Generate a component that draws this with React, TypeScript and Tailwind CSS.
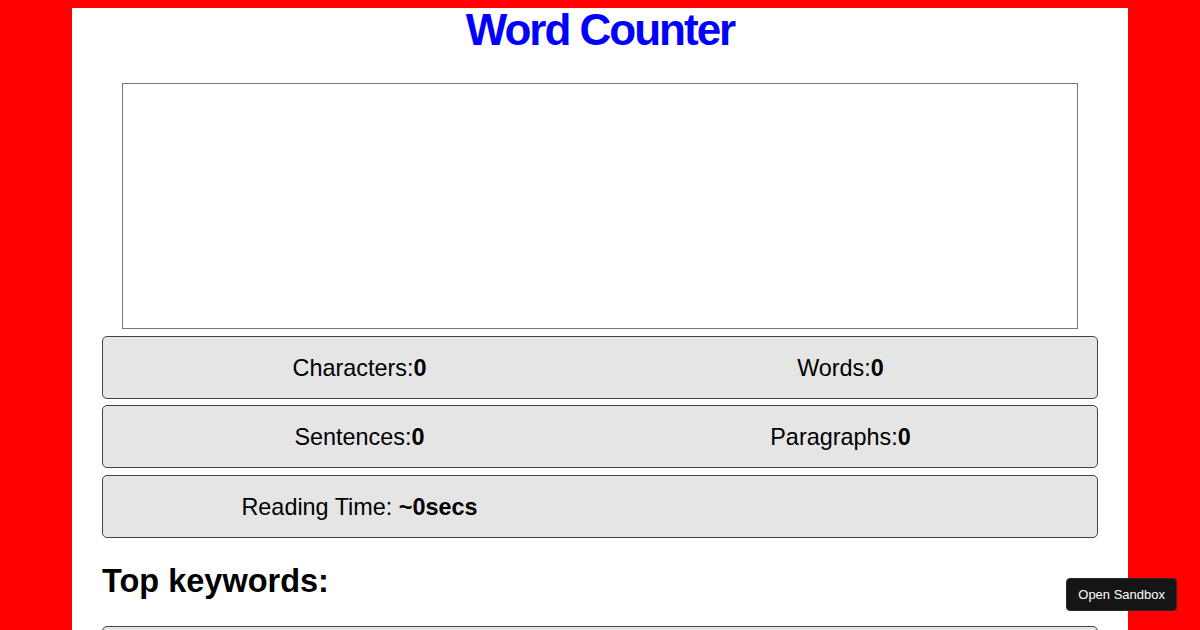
import React from "react";

function Stat({ label, value }: { label: string; value: string }) {
  return (
    <div className="flex-1 text-center">
      {label}
      <b className="font-bold">{value}</b>
    </div>
  );
}

export default function App() {
  return (
    <div className="h-[630px] overflow-hidden bg-[#ff0000] pt-2 font-['Liberation_Sans',Arial,sans-serif] text-black">
      <div className="relative mx-auto min-h-[700px] w-[1056px] bg-white">
        <h1 className="text-center text-[44px] font-bold leading-[44px] tracking-[-2px] text-[#0000ff]">Word Counter</h1>
        <div className="mt-[31px] px-[50px]">
          <textarea className="block h-[246px] w-full resize-none border border-[#767676] bg-white" />
        </div>
        <div className="mt-[7px] px-[30px] text-[23.4px]">
          <div className="flex h-[63px] items-center rounded-[5px] border border-[#444] bg-[#e5e5e5] px-4 pt-[3px]">
            <Stat label="Characters:" value="0" />
            <Stat label="Words:" value="0" />
          </div>
          <div className="mt-[6px] flex h-[63px] items-center rounded-[5px] border border-[#444] bg-[#e5e5e5] px-4 pt-[3px]">
            <Stat label="Sentences:" value="0" />
            <Stat label="Paragraphs:" value="0" />
          </div>
          <div className="mt-[7px] flex h-[63px] items-center rounded-[5px] border border-[#444] bg-[#e5e5e5] px-4 pt-[3px]">
            <div className="flex-1 text-center">
              Reading Time: <b className="font-bold">~0secs</b>
            </div>
            <div className="flex-1" />
          </div>
          <h2 className="mt-[25px] text-[32.5px] font-bold leading-[37px]">Top keywords:</h2>
          <div className="mt-[26px] h-[63px] rounded-[5px] border border-[#444] bg-[#e5e5e5]" />
        </div>
      </div>
      <div className="fixed bottom-[19px] right-[23px] rounded-[4px] border border-[#2a2a2a] bg-[#151515] px-[11px] py-[6.5px] font-['Liberation_Sans',Arial,sans-serif] text-[13px] leading-[18px] text-white">
        Open Sandbox
      </div>
    </div>
  );
}
